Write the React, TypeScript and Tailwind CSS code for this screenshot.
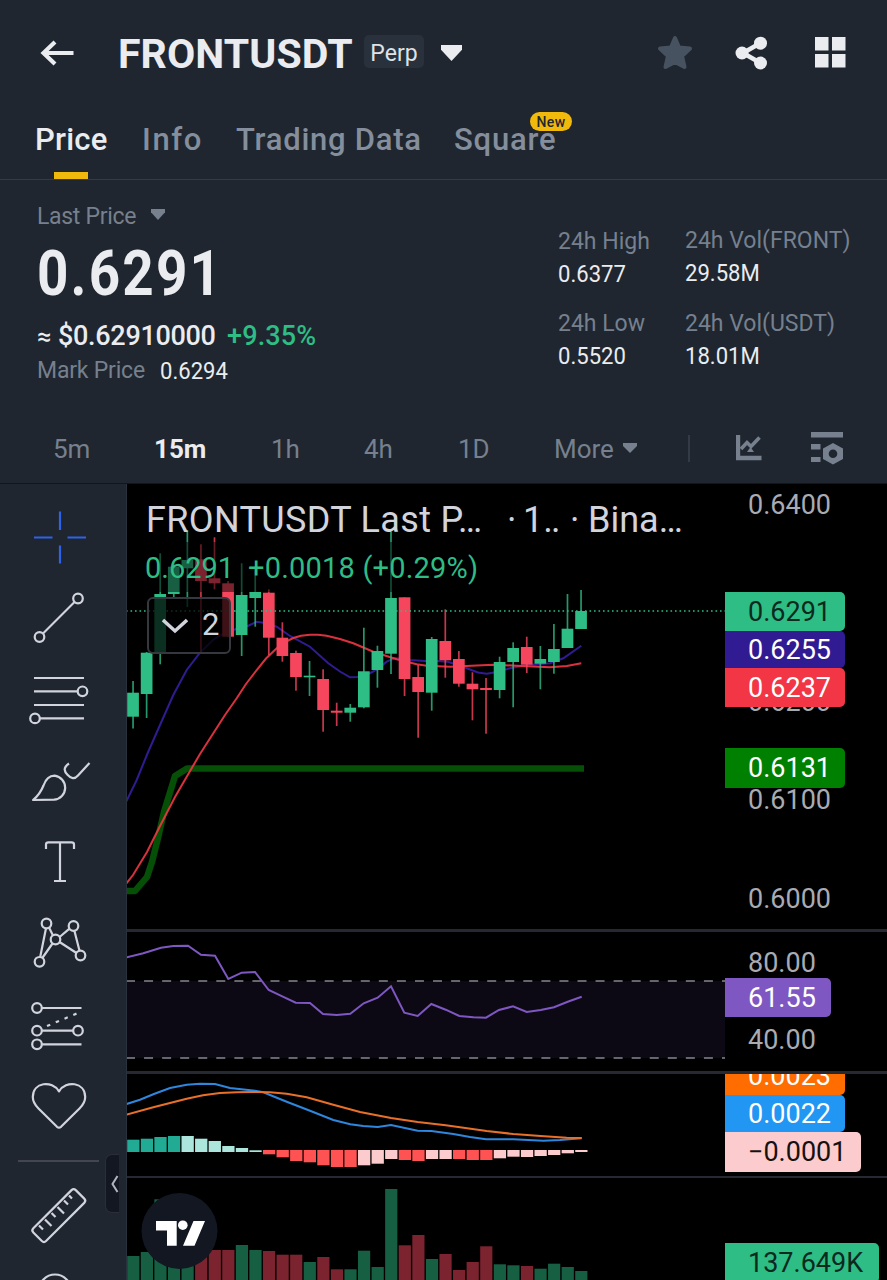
import type { ReactNode } from 'react';

const GREEN = '#2ebd85';
const RED = '#f6465d';

const BAR_PITCH = 13.576;
const barX = (i: number) => 127.2 + i * BAR_PITCH;

// [high, body top, body bottom, low, direction]
type Candle = [number, number, number, number, 'up' | 'down'];

const candles: Candle[] = [
  [681, 692.7, 716.7, 728.5, 'up'],
  [652, 652.7, 694, 718, 'up'],
  [553.3, 594, 652, 664.3, 'up'],
  [562, 566.7, 594, 597, 'up'],
  [530, 560, 568.3, 607, 'up'],
  [544.3, 559.3, 581, 652, 'down'],
  [537.3, 578.3, 583.3, 589.3, 'down'],
  [581, 583.3, 636.7, 637, 'down'],
  [563.3, 595, 635, 656, 'up'],
  [566.7, 592, 598, 626.7, 'up'],
  [589.3, 592.7, 637.7, 655, 'down'],
  [622.3, 637.7, 656, 661.7, 'down'],
  [650.7, 653, 677, 690.7, 'down'],
  [661, 675.7, 677.3, 696, 'up'],
  [669.3, 679, 710, 731.7, 'down'],
  [702.7, 710.7, 712.7, 726, 'down'],
  [704, 707.7, 712.7, 721.7, 'up'],
  [627.7, 671.3, 707.3, 708.3, 'up'],
  [645.7, 651, 670, 687.7, 'up'],
  [531.7, 598, 653.7, 674, 'up'],
  [597.3, 597.3, 679, 696, 'down'],
  [665, 677, 692, 737.7, 'down'],
  [637, 639, 692.7, 710.7, 'up'],
  [609.3, 641, 660.3, 677.7, 'down'],
  [651, 659, 683.7, 686.7, 'down'],
  [672.3, 683.7, 689.3, 720.3, 'down'],
  [678, 688, 690, 733.7, 'down'],
  [656.7, 662, 690, 698.3, 'up'],
  [642.3, 648, 662, 707.3, 'up'],
  [636.7, 647, 664.7, 673, 'down'],
  [646, 659, 663.7, 689.3, 'up'],
  [624, 649, 662, 673.7, 'up'],
  [594, 628.7, 648, 648, 'up'],
  [590, 611, 629, 629, 'up'],
];

const volumeTops = [
  1256, 1252, 1199.3, 1262, 1262, 1252, 1250, 1250, 1245, 1250, 1251, 1254.7, 1254.7, 1262, 1257, 1269.3, 1269.3,
  1250.7, 1267, 1189, 1245.3, 1235, 1259, 1254, 1270, 1262, 1246.3, 1264.3, 1265.3, 1266, 1268.7, 1263.7, 1267, 1271,
];

// [top, bottom, fill]
const histogram: [number, number, string][] = [
  [1139.7, 1152, '#22ab94'],
  [1138.7, 1152, '#22ab94'],
  [1137, 1152, '#22ab94'],
  [1136, 1152, '#22ab94'],
  [1136, 1152, '#ace5dc'],
  [1138.7, 1152, '#ace5dc'],
  [1141, 1152, '#ace5dc'],
  [1146, 1152, '#ace5dc'],
  [1148, 1152, '#ace5dc'],
  [1150.3, 1152, '#ace5dc'],
  [1150, 1154.3, '#ff5252'],
  [1150, 1157.3, '#ff5252'],
  [1150, 1161, '#ff5252'],
  [1150, 1162.3, '#ff5252'],
  [1150, 1165.3, '#ff5252'],
  [1150, 1167, '#ff5252'],
  [1150, 1167, '#ff5252'],
  [1150, 1165.3, '#fccbcd'],
  [1150, 1163.7, '#fccbcd'],
  [1150, 1159, '#fccbcd'],
  [1150, 1160, '#ff5252'],
  [1150, 1161, '#ff5252'],
  [1150, 1159, '#fccbcd'],
  [1150, 1159, '#fccbcd'],
  [1150, 1159, '#ff5252'],
  [1150, 1160, '#ff5252'],
  [1150, 1160, '#ff5252'],
  [1150, 1158.3, '#fccbcd'],
  [1150, 1156.7, '#fccbcd'],
  [1150, 1157, '#fccbcd'],
  [1150, 1156, '#fccbcd'],
  [1150, 1155, '#fccbcd'],
  [1150, 1153.3, '#fccbcd'],
  [1150, 1152, '#fccbcd'],
];

const MA_FAST =
  '126,802 136.7,780 147.7,753 160,725 173.3,695 186.7,670 200,652.7 213,640 226,632 240,628 248.3,625.7 256.7,621.7 266.7,623.3 276.7,626.7 290,636 310,646.7 328.3,663.3 340,671.5 350,677.3 357,677 366.7,675 378,669 386.7,661.7 395,658 410,660 425,661 436.7,661 448,661.7 466.7,668.3 478,672.5 486.7,673.7 497,672 510,668.3 526.7,665 550,663.3 563.3,658.3 581.3,645.7';
const MA_SLOW =
  '126,884 133,875 147,852 160,826 175,797 188.3,774 200,754 213.3,733.3 225,715 236.7,698.3 246,684 256.7,670 266,658.5 276.7,648.3 284,642.5 293.3,638 301,635.7 310,634.7 318,634.8 326.7,635.7 340,639 353.3,643.3 373.3,651.7 396.7,659.3 416.7,664.3 426.7,665.7 450,666.7 493,664.7 516.7,665.7 550,667.3 566.7,666 581.3,663.3';
const RSI =
  '126.5,957.3 143.3,953.3 161,947.7 173.3,946 188,945.7 201,954.7 215,955.7 228.3,979 241.7,972.7 255,972 268.7,990 282.3,996.3 295.7,1002.7 310,1003 323,1014 336.7,1015 350.3,1013.7 363.7,1003.3 377.7,997.7 391,986.3 404.3,1012.7 417.7,1016 431.3,1004 445.7,1009.7 459.3,1016 473.3,1017.3 486,1017.7 499,1010 513,1006.3 526.7,1012 540.7,1010 554,1007.3 567.7,1001.7 581.7,996.7';
const MACD_LINE =
  '126.5,1104 140,1099.7 153.3,1094.3 170,1088 186.7,1084.7 200,1083.7 215,1084 230,1088 255,1090.7 263.3,1092.3 286.7,1101.7 310,1110.7 333.3,1120 350.3,1124.3 363.3,1126 377.7,1127 391,1125 417.7,1130.7 431.3,1131 453.3,1134 470,1137 486,1139.3 513.3,1139.3 543.3,1140.7 560,1140 581.7,1138.3';
const SIGNAL_LINE =
  '126.5,1114.7 153.3,1107.3 170,1103 186.7,1098.7 203,1095.3 220,1093 237,1092.2 255,1092 270,1092.3 286.7,1093.7 306.7,1097.3 333.3,1104.7 360,1112 391,1118 417.7,1122 445.7,1125.3 486.7,1131 513.3,1134 540.7,1136 566.7,1137.7 581.7,1138';

function Caret({ className, width, height }: { className: string; width: number; height: number }) {
  return (
    <svg className={className} width={width} height={height} viewBox="0 0 14 10" preserveAspectRatio="none" fill="currentColor" aria-hidden>
      <path d="M0 0H14V3L7 10L0 3Z" />
    </svg>
  );
}

function Header() {
  return (
    <header className="flex h-[106px] items-center pl-10">
      <svg className="w-[78px] shrink-0" height="30" viewBox="0 0 78 30" fill="none" stroke="#eaecef" strokeWidth="4.2" aria-hidden>
        <path d="M3.500 15H33.500M15 4L3.500 15L15 26" />
      </svg>
      <h1 className="w-[246px] shrink-0 pt-[2px] text-[41px] leading-none font-bold tracking-[0.1px] whitespace-nowrap text-[#eaecef]">FRONTUSDT</h1>
      <span className="mb-1 flex h-[33px] w-[60px] items-center justify-center rounded-[5px] bg-[#29313d] pt-[5px] text-[23px] leading-none text-[#dfe1e5]">Perp</span>
      <Caret className="ml-[17px] text-[#eaecef]" width={21} height={16} />
      <div className="ml-auto flex items-center pr-[41px]">
        <svg width="36" height="36" viewBox="0 0 36 36" fill="#475261" stroke="#475261" strokeWidth="4" strokeLinejoin="round" aria-hidden>
          <path d="M18 3L22 12.500L33 13.500L25 21L27.500 32L18 27L8.500 32L11 21L3 13.500L14 12.500Z" />
        </svg>
        <svg className="ml-[42px]" width="34" height="34" viewBox="0 0 34 34" fill="#eaecef" aria-hidden>
          <path d="M25.500 7L8 17L25.500 27" fill="none" stroke="#eaecef" strokeWidth="4.500" />
          <circle cx="7" cy="17" r="6.500" />
          <circle cx="25.500" cy="7.200" r="6.500" />
          <circle cx="25.500" cy="27" r="6.500" />
        </svg>
        <svg className="ml-[46px]" width="31" height="32" viewBox="0 0 31 32" fill="#eaecef" aria-hidden>
          <path d="M0 0H13.500V13.500H0ZM17 0H30.500V13.500H17ZM0 17H13.500V30.500H0ZM17 17H30.500V30.500H17Z" />
        </svg>
      </div>
    </header>
  );
}

function Tabs() {
  return (
    <nav className="flex h-[74px] border-b border-[#333b47] pt-[14px] pl-[35px] text-[31px] leading-[40px] font-medium whitespace-nowrap text-[#848e9c]">
      <div className="flex w-[107px] flex-col">
        <span className="tracking-[0.200px] text-[#eaecef]">Price</span>
        <span className="mt-[12px] ml-[19px] h-[7px] w-[34px] bg-[#f0b90b]" />
      </div>
      <span className="w-[94px] tracking-[1.6px]">Info</span>
      <span className="w-[218px] tracking-[0.750px]">Trading Data</span>
      <span className="relative tracking-[0.8px]">
        Square
        <span className="absolute -top-[8px] left-[76px] flex h-[19px] w-[42px] items-center justify-center rounded-full bg-[#f0b90b] text-[14px] leading-none tracking-[0.4px] text-[#202630]">New</span>
      </span>
    </nav>
  );
}

function Stat({ label, value }: { label: string; value: string }) {
  return (
    <div>
      <div className="text-[23px] leading-[30px] text-[#76808e]">{label}</div>
      <div className="mt-[2px] origin-left scale-x-[0.92] text-[24px] leading-[30px] text-[#eaecef]">{value}</div>
    </div>
  );
}

function PriceSummary() {
  return (
    <section className="flex h-[236px] pl-[37px] whitespace-nowrap">
      <div className="w-[521px]">
        <div className="mt-[23px] flex items-center text-[23px] leading-[28px] tracking-[-0.3px] text-[#76808e]">
          <span className="w-[114px]">Last Price</span>
          <Caret className="-mt-[6px] text-[#76808e]" width={14} height={11} />
        </div>
        <div className="mt-[12px] origin-left scale-x-[0.87] text-[63px] leading-[62px] font-bold tracking-[2.5px] text-[#eaecef]">0.6291</div>
        <div className="mt-[13px] flex text-[27px] leading-[36px] font-medium">
          <span className="w-[190px] tracking-[-0.3px] text-[#eaecef]">
            <span className="mr-[6px] inline-block w-[15px] text-[25px]">≈</span>$0.62910000
          </span>
          <span className="tracking-[0.150px] text-[#2ebd85]">+9.35%</span>
        </div>
        <div className="mt-[1px] flex leading-[30px]">
          <span className="w-[123px] text-[23px] tracking-[-0.2px] text-[#76808e]">Mark Price</span>
          <span className="origin-left scale-x-[0.92] text-[24px] text-[#eaecef]">0.6294</span>
        </div>
      </div>
      <div className="mt-[47px] flex w-[127px] flex-col gap-[20px]">
        <Stat label="24h High" value="0.6377" />
        <Stat label="24h Low" value="0.5520" />
      </div>
      <div className="mt-[46px] flex flex-col gap-[21px]">
        <Stat label="24h Vol(FRONT)" value="29.58M" />
        <Stat label="24h Vol(USDT)" value="18.01M" />
      </div>
    </section>
  );
}

function IntervalBar() {
  return (
    <div className="flex h-[67px] items-center pb-[2px] pl-[53px] text-[26px] leading-none whitespace-nowrap text-[#76808e]">
      <span className="w-[101px]">5m</span>
      <span className="w-[117px] font-bold text-[#eaecef]">15m</span>
      <span className="w-[93px]">1h</span>
      <span className="w-[94px]">4h</span>
      <span className="w-[96px]">1D</span>
      <span className="w-[69px]">More</span>
      <Caret className="-mt-[2px]" width={14} height={10} />
      <span className="ml-[51px] h-[27px] w-[2px] bg-[#333b47]" />
      <svg className="-mt-[2px] ml-[46px]" width="26" height="26" viewBox="0 0 26 26" fill="none" stroke="currentColor" aria-hidden>
        <path d="M2 0V23H25.500" strokeWidth="4.400" />
        <path d="M5 14L11 7.500L15 11.500L23.500 2.500" strokeWidth="3.600" />
        <path d="M14.500 12L18 17H11Z" fill="currentColor" stroke="none" />
      </svg>
      <svg className="ml-[49px]" width="33" height="33" viewBox="0 0 33 33" fill="currentColor" aria-hidden>
        <path d="M0 0H32V5.500H0ZM0 12H9.500V17.500H0ZM0 25H9.500V30H0Z" />
        <path fillRule="evenodd" d="M22 11L32 16.500V27L22 32.500L12 27V16.500ZM22 17.500A4.300 4.300 0 1 0 22 26.100A4.300 4.300 0 1 0 22 17.500Z" />
      </svg>
    </div>
  );
}

function Tool({ children, color = '#d1d4dc' }: { children: ReactNode; color?: string }) {
  return (
    <svg className="block shrink-0" width="62" height="81.100" viewBox="29 0 62 81.100" fill="none" stroke={color} strokeWidth="2.200" strokeLinejoin="round" aria-hidden>
      {children}
    </svg>
  );
}

function DrawingToolbar() {
  return (
    <aside className="relative w-[127px] shrink-0 border-r border-[#2a323d] bg-[#1f262f]">
      <div className="flex flex-col pt-[13px] pl-[29px]">
        <Tool color="#2f62e8">
          <path d="M34 40.500H52.500M67.500 40.500H86M60 14.500V33M60 48.500V66.500" />
        </Tool>
        <Tool>
          <circle cx="78" cy="20.500" r="4.800" />
          <circle cx="39.500" cy="59" r="4.800" />
          <path d="M43 55.500L74.500 24" />
        </Tool>
        <Tool>
          <path d="M34 19H84M34 32.300H77M34 46H84M40 59.400H84" />
          <circle cx="82.500" cy="32.300" r="4.800" />
          <circle cx="35" cy="59.400" r="4.800" />
        </Tool>
        <Tool>
          <path d="M33 60C37.500 56.500 41.500 50.500 43.500 45.500C46 38.500 50 35.700 54.500 35.700A12 12 0 0 1 54 59.600Z" />
          <path d="M69 23.500C62.500 28 64.500 31.500 67.500 34.800C71 38.800 74.500 39.500 78 35.500L89.500 23" />
        </Tool>
        <Tool>
          <path d="M46 28V23.500Q46 21.300 48.500 21.300H71.500Q74 21.300 74 23.500V28M60 21.300V60M54 60H66" />
        </Tool>
        <Tool>
          <circle cx="46.500" cy="21.500" r="4.800" />
          <circle cx="73.500" cy="24" r="4.800" />
          <circle cx="55.500" cy="37.500" r="4.800" />
          <circle cx="39.500" cy="59.800" r="4.800" />
          <circle cx="80.500" cy="53.500" r="4.800" />
          <path d="M46 26.300L40.200 55M49 25.500L53 33.500M52.500 41.500L42.300 56M59.600 35L69.500 26.700M59.500 40L76.500 51M74.400 28.800L79.500 48.700" />
        </Tool>
        <Tool>
          <circle cx="37" cy="24" r="4.800" />
          <circle cx="37" cy="46.700" r="4.800" />
          <circle cx="37" cy="60.300" r="4.800" />
          <circle cx="78" cy="46.700" r="4.800" />
          <path d="M42 24H81.500M42 46.700H73M42 60.300H81.500" />
          <path d="M47 42L78 29" strokeDasharray="3.500 6" />
        </Tool>
        <Tool>
          <path d="M59 26.300C52 15 33 17 32.800 32C32.800 37.500 35.500 40.500 38.500 43.500L57 61.800Q59 63.500 61 61.800L79.500 43.500C82.500 40.500 85.200 37.500 85.200 32C85 17 66 15 59 26.300Z" />
        </Tool>
      </div>
      <div className="mt-[14px] ml-[18px] h-[2px] w-[81px] bg-[#434651]" />
      <div className="flex flex-col pt-[13px] pl-[29px]">
        <Tool>
          <rect x="-30" y="-10" width="60" height="18" rx="3" transform="translate(59.500 41.300) rotate(-45)" />
          <path d="M39 48.500L43 52.500M45 42.500L51.500 49M51.500 36L55.500 40M57.500 30L64 36.500M64 23.500L68 27.500M69 18.500L72 21.500" transform="translate(0 2)" />
        </Tool>
        <Tool>
          <circle cx="55" cy="34.500" r="16" />
        </Tool>
      </div>
      <div className="absolute top-[670px] left-[105px] flex h-[59px] w-[14px] items-center justify-end rounded-l-[7px] border border-r-0 border-[#2a2e39] bg-[#131722]">
        <svg width="9" height="18" viewBox="0 0 9 18" fill="none" stroke="#b2b5be" strokeWidth="2" aria-hidden>
          <path d="M7.500 1L2.500 9L7.500 17" />
        </svg>
      </div>
    </aside>
  );
}

function Tag({ className, children }: { className: string; children: ReactNode }) {
  return <div className={`flex items-center rounded-r-[5px] pt-px pl-[23px] ${className}`}>{children}</div>;
}

function PricePane() {
  return (
    <div className="relative flex h-[445px] shrink-0 overflow-hidden">
      <svg className="block shrink-0" width="598" height="445" viewBox="127 484 598 445" fill="none" aria-hidden>
        <polyline points={MA_FAST} stroke="#311b92" strokeWidth="2" />
        <path d="M126 891H135L147 877L152 862L158 838L164 812L175 776L187 768.500H584" stroke="#064f06" strokeWidth="6.500" strokeLinejoin="round" />
        <polyline points={MA_SLOW} stroke="#f23645" strokeWidth="2" opacity="0.9" />
        {candles.map(([high, top, bottom, low, dir], i) => (
          <g key={i} fill={dir === 'up' ? GREEN : RED}>
            <rect x={barX(i) + 5} y={high} width="1.700" height={low - high} opacity="0.8" />
            <rect x={barX(i)} y={top} width="11.700" height={bottom - top} />
          </g>
        ))}
        <path d="M126 611H725" stroke={GREEN} strokeWidth="1.500" strokeDasharray="1.600 2.900" />
      </svg>

      <div className="absolute top-[12px] left-[14px] w-[600px] whitespace-nowrap">
        <div className="flex h-[46px] items-center pt-[2px] pl-[5px] text-[36px] leading-none text-[#d1d4dc]">
          <span className="w-[361px] tracking-[0.350px]">FRONTUSDT Last P…</span>
          <span className="w-[16px]">·</span>
          <span className="w-[47px]">1‥</span>
          <span className="w-[18px]">·</span>
          <span>Bina…</span>
        </div>
        <div className="flex h-[50px] w-[346px] items-center bg-black/50 pt-[3px] pl-[4px] text-[29px] leading-none text-[#2ebd85]">
          <span className="w-[103px]">0.6291</span>
          <span className="tracking-[0.2px]">+0.0018 (+0.29%)</span>
        </div>
        <div className="mt-[5px] ml-[6px] flex h-[57px] w-[84px] items-center rounded-[6px] border-2 border-[#36383f] bg-black/75 pb-[3px] pl-[13px] text-[31px] leading-none text-[#d1d4dc]">
          <svg className="mt-[3px] mr-[14px]" width="26" height="16" viewBox="0 0 26 16" fill="none" stroke="#d1d4dc" strokeWidth="3.500" aria-hidden>
            <path d="M1 2L13 13L25 2" />
          </svg>
          2
        </div>
      </div>

      <div className="relative grow text-[27px] leading-none">
        <div className="-mt-[28px] flex flex-col pl-[23px] text-[#a9abb3]">
          <span className="mb-[98.500px] flex h-[98.500px] items-center">0.6400</span>
          {['0.6200', '0.6100', '0.6000'].map((tick) => (
            <span key={tick} className="flex h-[98.500px] items-center">
              {tick}
            </span>
          ))}
        </div>
        <div className="absolute top-[108px] left-0 flex w-[120px] flex-col text-white">
          <Tag className="h-[39px] bg-[#2ebd85] text-[#0b2a1d]">0.6291</Tag>
          <Tag className="h-[37px] bg-[#311b92]">0.6255</Tag>
          <Tag className="h-[39px] bg-[#f23645]">0.6237</Tag>
          <Tag className="mt-[41px] h-[40px] bg-[#008000]">0.6131</Tag>
        </div>
      </div>
    </div>
  );
}

function RsiPane() {
  return (
    <div className="flex h-[142px] shrink-0 overflow-hidden border-t-[3px] border-[#262932]">
      <svg className="block shrink-0" width="598" height="139" viewBox="127 932 598 139" fill="none" aria-hidden>
        <rect x="126" y="981" width="599" height="77" fill="#7e57c2" fillOpacity="0.100" />
        <path d="M126 981H725M126 1058H725" stroke="#85878d" strokeWidth="1.500" strokeDasharray="9 9.060" />
        <polyline points={RSI} stroke="#7e57c2" strokeWidth="2" />
      </svg>
      <div className="flex grow flex-col items-start pt-[11px] text-[27px] leading-none text-[#a9abb3]">
        <span className="flex h-[35px] items-center pt-[5px] pl-[23px]">80.00</span>
        <Tag className="h-[39px] w-[106px] bg-[#7e57c2] text-white">61.55</Tag>
        <span className="flex h-[45px] items-center pt-px pl-[23px]">40.00</span>
      </div>
    </div>
  );
}

function MacdPane() {
  return (
    <div className="flex h-[105px] shrink-0 overflow-hidden border-t-[3px] border-[#262932]">
      <svg className="block shrink-0" width="598" height="102" viewBox="127 1074 598 102" fill="none" aria-hidden>
        {histogram.map(([top, bottom, fill], i) => (
          <rect key={i} x={barX(i)} y={top} width="12.300" height={bottom - top} fill={fill} />
        ))}
        <polyline points={MACD_LINE} stroke="#2f86dd" strokeWidth="2" />
        <polyline points={SIGNAL_LINE} stroke="#e8702a" strokeWidth="2" />
      </svg>
      <div className="-mt-[18px] flex grow flex-col text-[27px] leading-none text-white">
        <Tag className="h-[39px] w-[120px] shrink-0 bg-[#ff6d00]">0.0023</Tag>
        <Tag className="h-[37px] w-[120px] shrink-0 bg-[#2196f3]">0.0022</Tag>
        <Tag className="h-[40px] w-[136px] shrink-0 bg-[#fccbcd] text-[#16100f]">−0.0001</Tag>
      </div>
    </div>
  );
}

function VolumePane() {
  return (
    <div className="flex grow overflow-hidden border-t-2 border-[#262932]">
      <svg className="block shrink-0" width="598" height="102" viewBox="127 1178 598 102" aria-hidden>
        {volumeTops.map((top, i) => (
          <rect key={i} x={barX(i)} y={top} width="12.200" height={1280 - top} fill={candles[i][4] === 'up' ? '#175f43' : '#7b232f'} />
        ))}
        <circle cx="179.500" cy="1231" r="38" fill="#131722" />
        <path d="M156 1221H176.700V1245.700H167V1230.500H156ZM193.500 1221H205L194.500 1245.700H183Z" fill="#fff" />
        <circle cx="182.800" cy="1225.200" r="4.800" fill="#fff" />
      </svg>
      <div className="grow pt-[65px] text-[27px] leading-none text-[#0b2a1d]">
        <Tag className="h-[40px] w-[154px] bg-[#2ebd85]">137.649K</Tag>
      </div>
    </div>
  );
}

export default function App() {
  return (
    <div className="flex h-[1280px] w-[887px] flex-col overflow-hidden bg-[#1f262f] font-['Roboto','Noto_Sans',sans-serif]">
      <Header />
      <Tabs />
      <PriceSummary />
      <IntervalBar />
      <div className="flex h-[797px] shrink-0 border-t border-[#11161c]">
        <DrawingToolbar />
        <main className="flex grow flex-col bg-black">
          <PricePane />
          <RsiPane />
          <MacdPane />
          <VolumePane />
        </main>
      </div>
    </div>
  );
}
